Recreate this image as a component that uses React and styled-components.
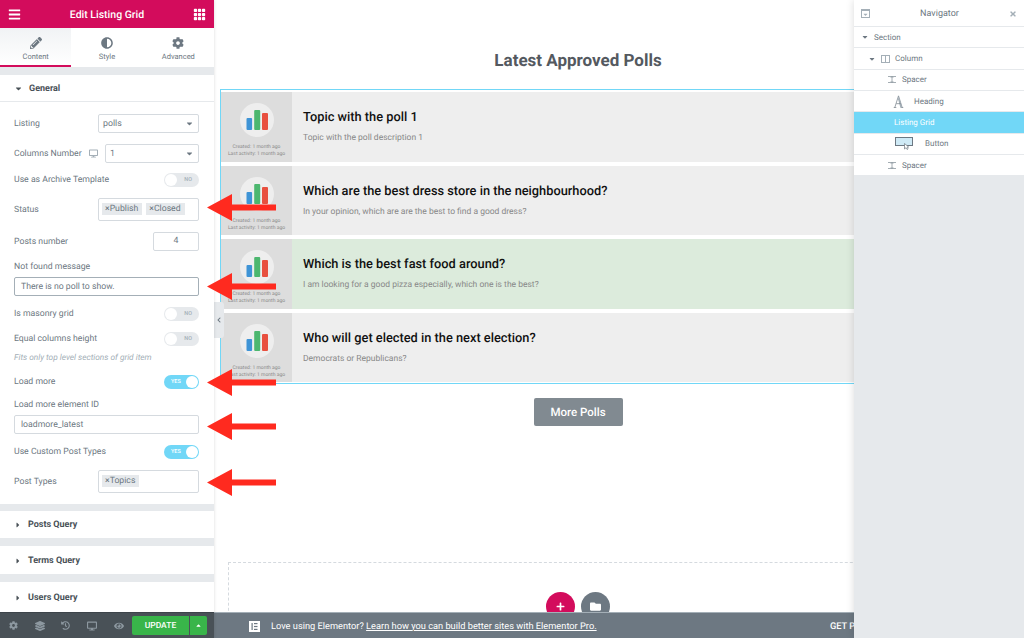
import React from "react";
import styled, { createGlobalStyle } from "styled-components";
import {
  FaBars,
  FaPencilAlt,
  FaAdjust,
  FaCog,
  FaDesktop,
  FaLayerGroup,
  FaHistory,
  FaEye,
  FaPlus,
  FaFolder,
  FaTimes,
  FaCaretDown,
  FaCaretRight,
  FaCaretUp,
  FaChevronLeft,
} from "react-icons/fa";
import { BsGrid3X3GapFill } from "react-icons/bs";

const GlobalStyle = createGlobalStyle`
  html, body { margin: 0; padding: 0; background: #fff; }
  * { box-sizing: border-box; }
  body { font-family: Roboto, "Liberation Sans", sans-serif; text-rendering: geometricPrecision; }
`;

const polls = [
  { id: 1, title: "Topic with the poll 1", text: "Topic with the poll description 1" },
  { id: 2, title: "Which are the best dress store in the neighbourhood?", text: "In your opinion, which are are the best to find a good dress?" },
  { id: 3, title: "Which is the best fast food around?", text: "I am looking for a good pizza especially, which one is the best?", green: true },
  { id: 4, title: "Who will get elected in the next election?", text: "Democrats or Republicans?" },
];

const App = () => (
  <Page>
    <GlobalStyle />
    <Panel>
      <PanelHeader>
        <FaBars size={13} />
        <PanelTitle>Edit Listing Grid</PanelTitle>
        <BsGrid3X3GapFill size={13} />
      </PanelHeader>
      <Tabs>
        <Tab $active>
          <FaPencilAlt size={12} />
          <span>Content</span>
        </Tab>
        <Tab>
          <FaAdjust size={12} />
          <span>Style</span>
        </Tab>
        <Tab>
          <FaCog size={12} />
          <span>Advanced</span>
        </Tab>
      </Tabs>
      <GrayBand $height={8} />
      <SectionHead $height={27} $line>
        <FaCaretDown size={9} color="#495157" />
        <span>General</span>
      </SectionHead>
      <Controls>
        <Row $top={12}>
          <Label>Listing</Label>
          <Select $width={101}>polls<FaCaretDown size={9} color="#6d7882" /></Select>
        </Row>
        <Row $top={11}>
          <Label>
            Columns Number <FaDesktop size={9} color="#a4afb7" style={{ marginLeft: 7 }} />
          </Label>
          <Select $width={94}>1<FaCaretDown size={9} color="#6d7882" /></Select>
        </Row>
        <Row $top={10}>
          <Label>Use as Archive Template</Label>
          <Toggle />
        </Row>
        <Row $top={11}>
          <Label>Status</Label>
          <TagBox>
            <Tag>×Publish</Tag>
            <Tag>×Closed</Tag>
          </TagBox>
        </Row>
        <Row $top={11}>
          <Label>Posts number</Label>
          <NumberBox>4</NumberBox>
        </Row>
        <StackLabel $top={8}>Not found message</StackLabel>
        <TextBox $focus>There is no poll to show.</TextBox>
        <Row $top={11}>
          <Label>Is masonry grid</Label>
          <Toggle />
        </Row>
        <Row $top={11}>
          <Label>Equal columns height</Label>
          <Toggle />
        </Row>
        <Note>Fits only top level sections of grid item</Note>
        <Row $top={10}>
          <Label>Load more</Label>
          <Toggle $on />
        </Row>
        <StackLabel $top={8}>Load more element ID</StackLabel>
        <TextBox>loadmore_latest</TextBox>
        <Row $top={11}>
          <Label>Use Custom Post Types</Label>
          <Toggle $on />
        </Row>
        <Row $top={11}>
          <Label>Post Types</Label>
          <TagBox>
            <Tag>×Topics</Tag>
          </TagBox>
        </Row>
      </Controls>
      <GrayBand $height={7} />
      <SectionHead $height={27}>
        <FaCaretRight size={8} color="#495157" />
        <span>Posts Query</span>
      </SectionHead>
      <GrayBand $height={8} />
      <SectionHead $height={28}>
        <FaCaretRight size={8} color="#495157" />
        <span>Terms Query</span>
      </SectionHead>
      <GrayBand $height={8} />
      <SectionHead $height={30}>
        <FaCaretRight size={8} color="#495157" />
        <span>Users Query</span>
      </SectionHead>
      <Footer>
        <FooterCell><FaCog size={9} /></FooterCell>
        <FooterCell><FaLayerGroup size={10} /></FooterCell>
        <FooterCell><FaHistory size={9} /></FooterCell>
        <FooterCell><FaDesktop size={10} /></FooterCell>
        <FooterCell><FaEye size={10} /></FooterCell>
        <UpdateGroup>
          <UpdateButton>UPDATE</UpdateButton>
          <UpdateMore><FaCaretUp size={7} /></UpdateMore>
        </UpdateGroup>
      </Footer>
    </Panel>

    <Canvas>
      <Preview>
        <Content>
          <Heading>Latest Approved Polls</Heading>
          <Grid>
            {polls.map((poll) => (
              <Card key={poll.id} $green={poll.green}>
                <Thumb>
                  <ThumbCircle>
                    <svg width="24" height="22" viewBox="0 0 24 22">
                      <rect x="1.5" y="9" width="5.6" height="12" rx="1" fill="#3f94d6" />
                      <rect x="9.2" y="1" width="6" height="20" rx="1" fill="#4cb76f" />
                      <rect x="17" y="4" width="6" height="17" rx="1" fill="#e8503f" />
                    </svg>
                  </ThumbCircle>
                  <ThumbCaption>Created: 1 month ago</ThumbCaption>
                  <ThumbCaption>Last activity: 1 month ago</ThumbCaption>
                </Thumb>
                <CardBody>
                  <CardTitle>{poll.title}</CardTitle>
                  <CardText>{poll.text}</CardText>
                </CardBody>
              </Card>
            ))}
          </Grid>
          <MoreButton>More Polls</MoreButton>
          <DropZone>
            <RoundButton $color="#d30c5c"><FaPlus size={9} /></RoundButton>
            <RoundButton $color="#6d7882"><FaFolder size={11} /></RoundButton>
          </DropZone>
        </Content>
      </Preview>
      <Promo>
        <PromoLogo>
          <svg width="7" height="7" viewBox="0 0 7 7">
            <rect x="0.5" y="0" width="1.2" height="7" fill="#6d7882" />
            <rect x="3" y="0" width="3.5" height="1.2" fill="#6d7882" />
            <rect x="3" y="2.9" width="3.5" height="1.2" fill="#6d7882" />
            <rect x="3" y="5.8" width="3.5" height="1.2" fill="#6d7882" />
          </svg>
        </PromoLogo>
        <span>Love using Elementor? <PromoLink>Learn how you can build better sites with Elementor Pro.</PromoLink></span>
        <PromoCta>GET PRO</PromoCta>
      </Promo>
      <CollapseHandle><FaChevronLeft size={6} /></CollapseHandle>
    </Canvas>

    <Navigator>
      <NavHead>
        <NavToggle><FaCaretDown size={7} color="#a4afb7" /></NavToggle>
        <span>Navigator</span>
        <FaTimes size={8} color="#a4afb7" />
      </NavHead>
      <NavRow $indent={7}>
        <FaCaretDown size={8} color="#6d7882" />
        <NavText $gap={5}>Section</NavText>
      </NavRow>
      <NavRow $indent={14}>
        <FaCaretDown size={8} color="#6d7882" />
        <svg width="9" height="8" viewBox="0 0 9 8" style={{ marginLeft: 5 }}>
          <rect x="0.5" y="0.5" width="8" height="7" fill="none" stroke="#a4afb7" />
          <line x1="4.5" y1="0.5" x2="4.5" y2="7.5" stroke="#a4afb7" />
        </svg>
        <NavText $gap={5}>Column</NavText>
      </NavRow>
      <NavRow $indent={34}>
        <SpacerIcon />
        <NavText $gap={6}>Spacer</NavText>
      </NavRow>
      <NavRow $indent={39}>
        <svg width="11" height="13" viewBox="0 0 11 15">
          <path d="M0 14.5h3M8 14.5h3M1.2 14.5L5.5 1l4.3 13.5" fill="none" stroke="#6d7882" strokeWidth="0.8" />
          <path d="M5.5 1l4.3 13.5H7.6L5 5z" fill="#a4afb7" />
          <path d="M3 10h5" stroke="#6d7882" strokeWidth="0.8" />
        </svg>
        <NavText $gap={10}>Heading</NavText>
      </NavRow>
      <NavRow $indent={40} $selected>
        <NavText $gap={0}>Listing Grid</NavText>
      </NavRow>
      <NavRow $indent={41}>
        <svg width="19" height="13" viewBox="0 0 19 13">
          <rect x="0.5" y="0.5" width="17" height="8" fill="#cfeaf6" stroke="#6d7882" />
          <path d="M9.5 6.5v5.5l1.4-1.2 1.2 1.7 1-.6-1.1-1.7 1.7-.2z" fill="#fff" stroke="#6d7882" strokeWidth="0.7" />
        </svg>
        <NavText $gap={11}>Button</NavText>
      </NavRow>
      <NavRow $indent={34}>
        <SpacerIcon />
        <NavText $gap={6}>Spacer</NavText>
      </NavRow>
    </Navigator>

    {[207, 286, 382, 426, 482].map((y) => (
      <Arrow key={y} $y={y} width="70" height="27" viewBox="0 0 70 27">
        <path d="M0 13.5L25 0v10.5h44v6H25V27z" fill="#ff2a1f" />
      </Arrow>
    ))}
  </Page>
);

const SpacerIcon = () => (
  <svg width="8" height="7" viewBox="0 0 8 7">
    <path d="M0 .5h8M0 6.5h8M4 .5v6M2.8 1.8L4 .6l1.2 1.2M2.8 5.2L4 6.4l1.2-1.2" fill="none" stroke="#8d98a0" strokeWidth="0.8" />
  </svg>
);

const Page = styled.div`
  position: relative;
  display: flex;
  width: 1024px;
  height: 638px;
  overflow: hidden;
  background: #fff;
`;

const Panel = styled.aside`
  width: 214px;
  flex: none;
  display: flex;
  flex-direction: column;
  background: #fff;
  color: #6d7882;
  box-shadow: 0 0 3px rgba(0, 0, 0, 0.15);
  position: relative;
  z-index: 2;
`;

const PanelHeader = styled.header`
  height: 28px;
  flex: none;
  display: flex;
  align-items: center;
  justify-content: space-between;
  padding: 0 8px;
  background: #d30c5c;
  color: #fff;
`;

const PanelTitle = styled.div`
  font-size: 10.5px;
  font-weight: 500;
`;

const Tabs = styled.nav`
  height: 39px;
  flex: none;
  display: flex;
`;

const Tab = styled.div`
  flex: 1;
  display: flex;
  flex-direction: column;
  align-items: center;
  justify-content: center;
  gap: 3px;
  padding-top: 4px;
  font-size: 7.5px;
  color: #6d7882;
  border-bottom: 2px solid ${({ $active }) => ($active ? "#d30c5c" : "transparent")};
  background: ${({ $active }) => ($active ? "linear-gradient(#f1f3f5, #fff)" : "#fff")};
`;

const GrayBand = styled.div`
  height: ${({ $height }) => $height}px;
  flex: none;
  background: #e6e9ec;
`;

const SectionHead = styled.div`
  height: ${({ $height }) => $height}px;
  flex: none;
  display: flex;
  align-items: center;
  gap: 6px;
  padding: 1px 0 0 14px;
  font-size: 9px;
  font-weight: 700;
  color: #495157;
  border-bottom: ${({ $line }) => ($line ? "1px solid #e6e9ec" : "none")};
`;

const Controls = styled.div`
  height: 402px;
  flex: none;
  padding: 0 15px 0 14px;
`;

const Row = styled.div`
  display: flex;
  align-items: center;
  justify-content: space-between;
  margin-top: ${({ $top }) => $top}px;
`;

const Label = styled.div`
  display: flex;
  align-items: center;
  font-size: 8.7px;
  color: #6d7882;
  white-space: nowrap;
`;

const StackLabel = styled.div`
  height: 14px;
  margin-top: ${({ $top }) => $top}px;
  margin-bottom: 4px;
  padding-top: 1px;
  font-size: 8.7px;
  line-height: 14px;
  color: #6d7882;
`;

const Select = styled.div`
  width: ${({ $width }) => $width}px;
  height: 19px;
  display: flex;
  align-items: center;
  justify-content: space-between;
  padding: 0 4px;
  border: 1px solid #d5dadf;
  border-radius: 2px;
  font-size: 8.8px;
  color: #6d7882;
`;

const NumberBox = styled.div`
  width: 46px;
  height: 19px;
  border: 1px solid #d5dadf;
  border-radius: 2px;
  font-size: 8.8px;
  line-height: 17px;
  text-align: center;
  color: #6d7882;
`;

const TextBox = styled.div`
  height: 19px;
  padding-left: 6px;
  border: 1px solid ${({ $focus }) => ($focus ? "#a4afb7" : "#d5dadf")};
  border-radius: 2px;
  font-size: 8.7px;
  line-height: 18px;
  color: #6d7882;
`;

const TagBox = styled.div`
  width: 101px;
  height: 23px;
  display: flex;
  align-items: flex-start;
  gap: 4px;
  padding: 4px 3px;
  border: 1px solid #d5dadf;
  border-radius: 2px;
`;

const Tag = styled.span`
  height: 12px;
  padding: 0 4px 0 3px;
  background: #e6e9ec;
  font-size: 8.7px;
  line-height: 12px;
  color: #6d7882;
`;

const Toggle = styled.div`
  position: relative;
  width: 35px;
  height: 14px;
  border-radius: 7px;
  background: ${({ $on }) => ($on ? "#71d7f7" : "#e6e9ec")};
  &::before {
    content: "${({ $on }) => ($on ? "YES" : "NO")}";
    position: absolute;
    top: 3.5px;
    ${({ $on }) => ($on ? "left: 7px;" : "right: 7px;")}
    font-size: 5.5px;
    line-height: 7px;
    font-weight: 500;
    color: ${({ $on }) => ($on ? "#fff" : "#a4afb7")};
  }
  &::after {
    content: "";
    position: absolute;
    top: 1px;
    ${({ $on }) => ($on ? "right: 1px;" : "left: 1px;")}
    width: 12px;
    height: 12px;
    border-radius: 50%;
    background: #fff;
  }
`;

const Note = styled.div`
  height: 14px;
  margin-top: 5px;
  font-size: 8.3px;
  line-height: 14px;
  font-style: italic;
  color: #a4afb7;
`;

const Footer = styled.footer`
  height: 26px;
  flex: none;
  display: flex;
  align-items: center;
  background: #495157;
  border-top: 1px solid #3d444a;
`;

const FooterCell = styled.div`
  width: 26.4px;
  flex: none;
  display: flex;
  justify-content: center;
  color: #8d98a0;
`;

const UpdateGroup = styled.div`
  display: flex;
  gap: 1px;
  height: 19px;
`;

const UpdateButton = styled.div`
  width: 57px;
  background: #39b54a;
  border-radius: 2px 0 0 2px;
  color: #fff;
  font-size: 8.5px;
  font-weight: 500;
  line-height: 20px;
  text-align: center;
`;

const UpdateMore = styled.div`
  width: 17px;
  display: flex;
  align-items: center;
  justify-content: center;
  background: #39b54a;
  border-radius: 0 2px 2px 0;
  color: #fff;
`;

const Canvas = styled.main`
  position: relative;
  flex: 1;
  min-width: 0;
  display: flex;
  flex-direction: column;
`;

const Preview = styled.div`
  flex: 1;
  min-height: 0;
  overflow: hidden;
  padding-left: 6px;
`;

const Content = styled.div`
  width: 716px;
  display: flex;
  flex-direction: column;
  align-items: center;
`;

const Heading = styled.h2`
  margin: 50px 0 17px;
  height: 22px;
  font-size: 17px;
  line-height: 22px;
  font-weight: 700;
  color: #54595f;
`;

const Grid = styled.div`
  width: 100%;
  height: 295px;
  display: flex;
  flex-direction: column;
  gap: 4px;
  padding: 2px 0 0 0;
  border: 1px solid #71d7f7;
  border-right: none;
`;

const Card = styled.article`
  height: 69.5px;
  flex: none;
  display: flex;
  background: ${({ $green }) => ($green ? "#dcebdc" : "#eeeeee")};
`;

const Thumb = styled.div`
  width: 71px;
  flex: none;
  display: flex;
  flex-direction: column;
  align-items: center;
  padding-top: 11px;
  background: #dddddd;
`;

const ThumbCircle = styled.div`
  width: 34px;
  height: 34px;
  margin-bottom: 7px;
  display: flex;
  align-items: center;
  justify-content: center;
  border-radius: 50%;
  background: #eeeeee;
`;

const ThumbCaption = styled.div`
  font-size: 5px;
  line-height: 7px;
  color: #8a8a8a;
  white-space: nowrap;
`;

const CardBody = styled.div`
  padding: 18px 0 0 11px;
`;

const CardTitle = styled.div`
  font-size: 12.8px;
  line-height: 16px;
  font-weight: 500;
  color: #111;
`;

const CardText = styled.div`
  margin-top: 6px;
  font-size: 8.5px;
  line-height: 12px;
  color: #888;
`;

const MoreButton = styled.div`
  width: 89px;
  height: 28px;
  margin-top: 14px;
  background: #818a91;
  border-radius: 2px;
  color: #fff;
  font-size: 11.5px;
  font-weight: 500;
  line-height: 28px;
  text-align: center;
`;

const DropZone = styled.div`
  width: 700px;
  height: 120px;
  margin-top: 136px;
  display: flex;
  justify-content: center;
  gap: 6px;
  padding-top: 29px;
  border: 1px dashed #d5dadf;
`;

const RoundButton = styled.div`
  width: 29px;
  height: 29px;
  display: flex;
  align-items: center;
  justify-content: center;
  border-radius: 50%;
  background: ${({ $color }) => $color};
  color: #fff;
`;

const Promo = styled.div`
  height: 26px;
  flex: none;
  position: relative;
  z-index: 1;
  display: flex;
  align-items: center;
  padding: 1px 0 0 35px;
  background: #6d7882;
  border-top: 1px solid #a4afb7;
  color: #fff;
  font-size: 9.25px;
`;

const PromoLogo = styled.div`
  width: 11px;
  height: 11px;
  margin-right: 11px;
  display: flex;
  align-items: center;
  justify-content: center;
  background: #fff;
`;

const PromoLink = styled.span`
  text-decoration: underline;
`;

const PromoCta = styled.span`
  position: absolute;
  left: 616px;
  font-weight: 500;
`;

const CollapseHandle = styled.div`
  position: absolute;
  left: 0;
  top: 302px;
  width: 10px;
  height: 36px;
  display: flex;
  align-items: center;
  justify-content: center;
  background: #e6e9ec;
  border-radius: 0 3px 3px 0;
  color: #6d7882;
`;

const Navigator = styled.aside`
  position: absolute;
  z-index: 3;
  top: 0;
  left: 854px;
  width: 170px;
  height: 638px;
  background: #e6e9ec;
  box-shadow: 0 0 8px rgba(0, 0, 0, 0.15);
`;

const NavHead = styled.div`
  height: 27px;
  display: flex;
  align-items: center;
  justify-content: space-between;
  padding: 1px 7px 0;
  background: #fff;
  border-bottom: 1px solid #e6e9ec;
  font-size: 9px;
  color: #6d7882;
`;

const NavToggle = styled.div`
  width: 9px;
  height: 9px;
  display: flex;
  align-items: center;
  justify-content: center;
  border: 1px solid #a4afb7;
  border-top-width: 2px;
`;

const NavRow = styled.div`
  height: 21.35px;
  display: flex;
  align-items: center;
  padding-left: ${({ $indent }) => $indent}px;
  background: ${({ $selected }) => ($selected ? "#71d7f7" : "#fff")};
  border-bottom: 1px solid #e6e9ec;
  color: ${({ $selected }) => ($selected ? "#fff" : "#6d7882")};
`;

const NavText = styled.span`
  margin-left: ${({ $gap }) => $gap}px;
  font-size: 8px;
`;

const Arrow = styled.svg`
  position: absolute;
  z-index: 5;
  left: 207px;
  top: ${({ $y }) => $y - 13.5}px;
`;

export default App;
